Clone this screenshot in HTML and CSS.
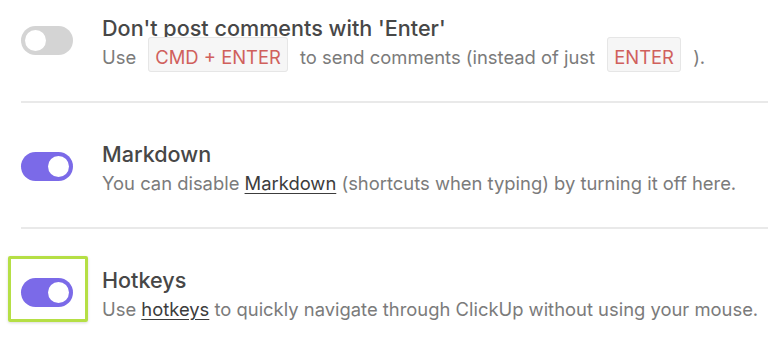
FILE: index.html
```
<!DOCTYPE html>
<html>
<head>
<meta charset="utf-8">
<link rel="stylesheet" href="styles.css">
</head>
<body>
<div class="list">
  <div class="row first">
    <div class="toggle-wrap">
      <div class="toggle off"><span class="knob"></span></div>
    </div>
    <div class="text">
      <div class="title">Don't post comments with 'Enter'</div>
      <div class="desc">Use <span class="kbd">CMD + ENTER</span> to send comments (instead of just <span class="kbd">ENTER</span> ).</div>
    </div>
  </div>
  <div class="row">
    <div class="toggle-wrap">
      <div class="toggle on"><span class="knob"></span></div>
    </div>
    <div class="text">
      <div class="title">Markdown</div>
      <div class="desc">You can disable <span class="link">Markdown</span> (shortcuts when typing) by turning it off here.</div>
    </div>
  </div>
  <div class="row last">
    <div class="toggle-wrap">
      <div class="toggle on"><span class="knob"></span></div>
      <div class="highlight"></div>
    </div>
    <div class="text">
      <div class="title">Hotkeys</div>
      <div class="desc">Use <span class="link">hotkeys</span> to quickly navigate through ClickUp without using your mouse.</div>
    </div>
  </div>
</div>
</body>
</html>
```
FILE: styles.css
```
html, body {
  margin: 0;
  padding: 0;
  background: #ffffff;
}
body {
  font-family: Inter, "Liberation Sans", Arial, sans-serif;
  width: 768px;
  height: 352px;
  overflow: hidden;
}
.list {
  display: flex;
  flex-direction: column;
  padding-left: 21px;
}
.row {
  display: flex;
  align-items: flex-start;
  padding: 37px 0 32px;
  border-bottom: 2px solid #e9e9e9;
}
.row.first {
  padding-top: 14px;
}
.row.last {
  border-bottom: none;
}
.toggle-wrap {
  position: relative;
  margin-top: 12px;
  width: 52px;
  flex: none;
  margin-right: 29px;
}
.toggle {
  width: 52px;
  height: 29px;
  border-radius: 15px;
  box-sizing: border-box;
  display: flex;
  align-items: center;
  padding: 0 4px;
}
.toggle.off {
  background: #d4d4d4;
  justify-content: flex-start;
}
.toggle.on {
  background: #7b6ae8;
  justify-content: flex-end;
}
.knob {
  width: 21px;
  height: 21px;
  border-radius: 50%;
  background: #ffffff;
}
.highlight {
  position: absolute;
  left: -13px;
  top: -22px;
  width: 80px;
  height: 66px;
  box-sizing: border-box;
  border: 3px solid #b5df45;
  border-radius: 2px;
  box-shadow: 0 1px 3px rgba(0,0,0,0.15);
}
.title {
  font-size: 21.6px;
  line-height: 28px;
  color: #474747;
  font-weight: 500;
}
.desc {
  margin-top: 3px;
  font-size: 18.4px;
  line-height: 24px;
  color: #7b7b7b;
  white-space: nowrap;
}
.kbd {
  color: #d0605c;
  background: #f6f6f6;
  border: 1px solid #e6e6e6;
  border-radius: 3px;
  padding: 8px 6px 3px;
  margin: 0 7px;
}
.link {
  color: #3c3c3c;
  text-decoration: underline;
  text-underline-offset: 3px;
}
```
